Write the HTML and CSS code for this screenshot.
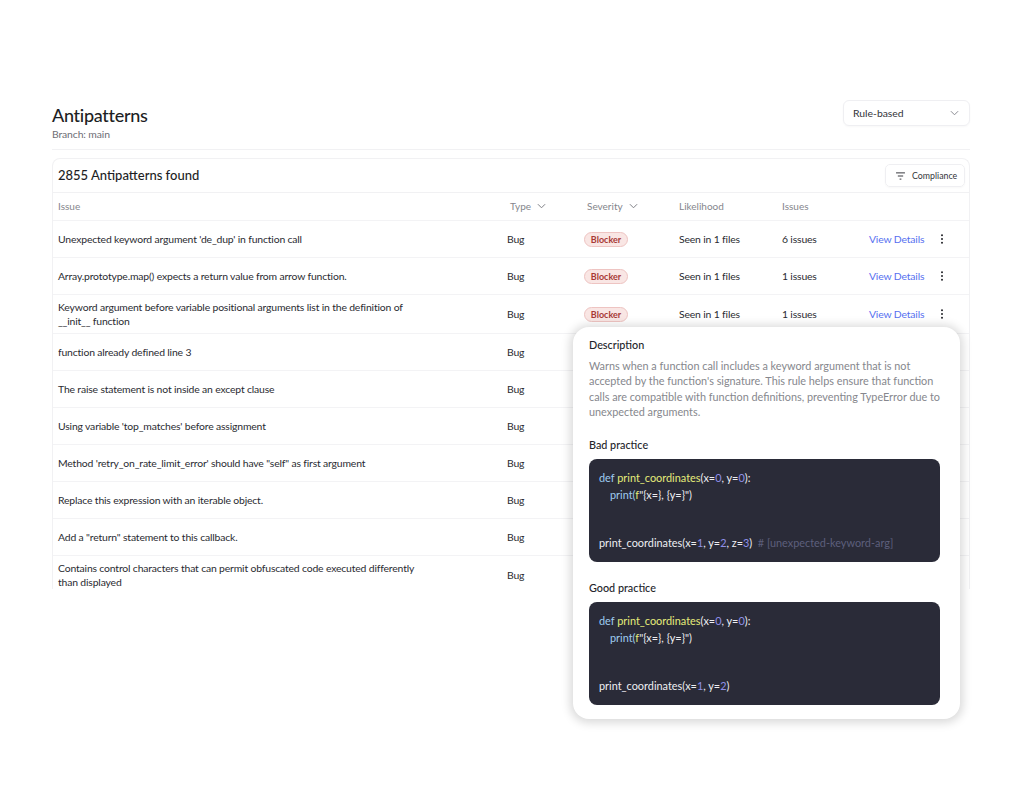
FILE: index.html
```html
<!DOCTYPE html>
<html lang="en">
<head>
<meta charset="utf-8">
<title>Antipatterns</title>
<link rel="stylesheet" href="styles.css">
</head>
<body>
<main class="page">
  <header class="head">
    <div>
      <h1 class="title">Antipatterns</h1>
      <p class="branch">Branch: main</p>
    </div>
    <div class="select">
      <span>Rule-based</span>
      <svg class="chev-lg" viewBox="0 0 10 6"><path d="M1 1l4 4 4-4"/></svg>
    </div>
  </header>

  <section class="card">
    <div class="card-top">
      <h2 class="found">2855 Antipatterns found</h2>
      <div class="filter">
        <svg class="filter-icon" viewBox="0 0 12 9"><path d="M1 1h10M3 4.5h6M5 8h2"/></svg>
        <span>Compliance</span>
      </div>
    </div>
    <div class="row row-head">
      <span>Issue</span>
      <span class="hcell">Type <svg class="chev" viewBox="0 0 10 6"><path d="M1 1l4 4 4-4"/></svg></span>
      <span class="hcell">Severity <svg class="chev" viewBox="0 0 10 6"><path d="M1 1l4 4 4-4"/></svg></span>
      <span>Likelihood</span>
      <span>Issues</span>
    </div>

    <div class="row">
      <span class="issue">Unexpected keyword argument 'de_dup' in function call</span><span>Bug</span><span><b class="badge">Blocker</b></span><span>Seen in 1 files</span><span>6 issues</span><a class="link">View Details</a>
      <svg class="dots" viewBox="0 0 4 12"><circle cx="2" cy="1.5" r="1.2"/><circle cx="2" cy="6" r="1.2"/><circle cx="2" cy="10.5" r="1.2"/></svg>
    </div>
    <div class="row">
      <span class="issue">Array.prototype.map() expects a return value from arrow function.</span><span>Bug</span><span><b class="badge">Blocker</b></span><span>Seen in 1 files</span><span>1 issues</span><a class="link">View Details</a>
      <svg class="dots" viewBox="0 0 4 12"><circle cx="2" cy="1.5" r="1.2"/><circle cx="2" cy="6" r="1.2"/><circle cx="2" cy="10.5" r="1.2"/></svg>
    </div>
    <div class="row">
      <span class="issue">Keyword argument before variable positional arguments list in the definition of __init__ function</span><span>Bug</span><span><b class="badge">Blocker</b></span><span>Seen in 1 files</span><span>1 issues</span><a class="link">View Details</a>
      <svg class="dots" viewBox="0 0 4 12"><circle cx="2" cy="1.5" r="1.2"/><circle cx="2" cy="6" r="1.2"/><circle cx="2" cy="10.5" r="1.2"/></svg>
    </div>
    <div class="row"><span class="issue">function already defined line 3</span><span>Bug</span></div>
    <div class="row"><span class="issue">The raise statement is not inside an except clause</span><span>Bug</span></div>
    <div class="row"><span class="issue">Using variable 'top_matches' before assignment</span><span>Bug</span></div>
    <div class="row"><span class="issue">Method 'retry_on_rate_limit_error' should have "self" as first argument</span><span>Bug</span></div>
    <div class="row"><span class="issue">Replace this expression with an iterable object.</span><span>Bug</span></div>
    <div class="row"><span class="issue">Add a "return" statement to this callback.</span><span>Bug</span></div>
    <div class="row"><span class="issue">Contains control characters that can permit obfuscated code executed differently than displayed</span><span>Bug</span></div>
  </section>

  <aside class="pop">
    <h3 class="pop-h">Description</h3>
    <p class="desc">Warns when a function call includes a keyword argument that is not accepted by the function's signature. This rule helps ensure that function calls are compatible with function definitions, preventing TypeError due to unexpected arguments.</p>
    <h3 class="pop-h pop-next">Bad practice</h3>
    <div class="code">
      <div class="ln"><span class="kw">def</span> <span class="fn">print_coordinates</span>(x=<span class="num">0</span>, y=<span class="num">0</span>):</div>
      <div class="ln ind"><span class="kw">print(</span><span class="fn">f</span>"{x=}, {y=}")</div>
      <div class="ln last">print_coordinates(x=<span class="num">1</span>, y=<span class="num">2</span>, z=<span class="num">3</span>) &nbsp;<span class="cm"># [unexpected-keyword-arg]</span></div>
    </div>
    <h3 class="pop-h pop-next">Good practice</h3>
    <div class="code">
      <div class="ln"><span class="kw">def</span> <span class="fn">print_coordinates</span>(x=<span class="num">0</span>, y=<span class="num">0</span>):</div>
      <div class="ln ind"><span class="kw">print(</span><span class="fn">f</span>"{x=}, {y=}")</div>
      <div class="ln last">print_coordinates(x=<span class="num">1</span>, y=<span class="num">2</span>)</div>
    </div>
  </aside>
</main>
</body>
</html>
```
FILE: styles.css
```css
* { box-sizing: border-box; }
html, body { margin: 0; background: #fff; }
body { font-family: "Lato", "Open Sans", sans-serif; color: #23242a; height: 802px; overflow: hidden; }
.page { position: relative; padding: 100px 54px 0 52px; height: 802px; }

.head { display: flex; justify-content: space-between; align-items: flex-start; height: 50px; border-bottom: 1px solid #f1f1f3; }
.title { margin: 4px 0 0; font-size: 18px; line-height: 22px; font-weight: 500; color: #1d1e24; letter-spacing: -.3px; }
.branch { margin: 1px 0 0; font-size: 10.4px; line-height: 14px; letter-spacing: -.12px; color: #6d6e75; }
.select { width: 127px; height: 26px; padding: 0 10px 0 9px; display: flex; justify-content: space-between; align-items: center; border: 1px solid #efeff2; border-radius: 6px; font-size: 10.4px; color: #33343a; box-shadow: 0 1px 2px rgba(0,0,0,.03); }
.chev-lg { width: 9px; height: 6px; fill: none; stroke: #8a8b92; stroke-width: 1.1; }

.card { margin-top: 8px; height: 431px; overflow: hidden; border: 1px solid #f1f1f3; border-bottom: 0; border-radius: 8px 8px 0 0; }
.card-top { height: 34px; padding: 5px 4px 0 5px; display: flex; justify-content: space-between; border-bottom: 1px solid #f1f1f3; }
.found { margin: 3px 0 0; font-size: 13px; line-height: 17px; font-weight: 500; color: #1d1e24; }
.filter { width: 80px; height: 23px; display: flex; align-items: center; gap: 6px; padding-left: 9px; border: 1px solid #efeff2; border-radius: 5px; font-size: 8.8px; color: #33343a; box-shadow: 0 1px 2px rgba(0,0,0,.03); }
.filter-icon { width: 11px; height: 8px; fill: none; stroke: #33343a; stroke-width: 1.1; }

.row { display: grid; grid-template-columns: 449px 77px 95px 103px 87px 71px 8px; align-items: center; min-height: 37px; padding: 5px 0 5px 5px; border-bottom: 1px solid #f3f3f5; font-size: 10.4px; line-height: 14px; letter-spacing: -.16px; color: #2a2b31; }
.row-head { min-height: 28px; padding-top: 0; padding-bottom: 2px; color: #85868c; font-size: 10px; letter-spacing: 0; }
.hcell { padding-left: 3px; display: flex; align-items: center; gap: 6px; }
.chev { width: 9px; height: 6px; fill: none; stroke: #7d7e85; stroke-width: 1.1; }
.issue { display: block; max-width: 365px; }
.badge { display: inline-block; width: 44px; height: 15px; border: 1px solid #eec4c2; border-radius: 8px; background: #f9e6e4; color: #a83a36; font-size: 9px; font-weight: 700; line-height: 13px; letter-spacing: 0; text-align: center; vertical-align: middle; }
.link { color: #5670f0; }
.dots { width: 4px; height: 10px; fill: #23242a; }

.pop { position: absolute; left: 573px; top: 327px; width: 387px; height: 392px; padding: 11px 20px 0 16px; background: #fff; border-radius: 16px; box-shadow: 0 1px 10px 3px rgba(0,0,0,.15); }
.pop-h { margin: 0; font-size: 10.8px; line-height: 14px; font-weight: 500; color: #23242a; }
.desc { margin: 6px -6px 0 0; font-size: 10.85px; line-height: 15.3px; color: #86878d; }
.pop-next { margin-top: 19px; }
.code { height: 103px; margin-top: 7px; padding: 10px 10px 0; background: #2a2b38; border-radius: 8px; color: #eeeef2; font-size: 10.9px; }
.ln { height: 17px; line-height: 17px; white-space: nowrap; }
.ind { padding-left: 11px; }
.last { margin-top: 31px; }
.kw { color: #9fcbf0; }
.fn { color: #e6ec7a; }
.num { color: #8f8fe8; }
.cm { color: #5d5f7c; }
```
